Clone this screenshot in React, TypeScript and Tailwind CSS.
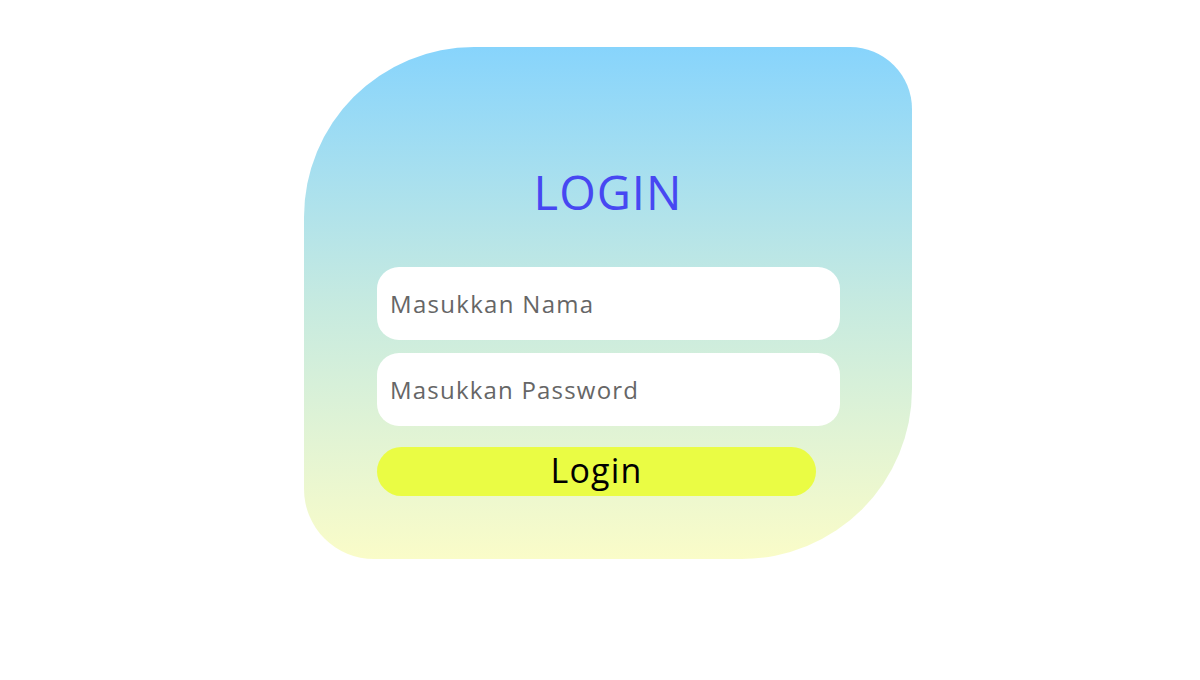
import React from "react";

export default function App() {
  return (
    <div
      className="min-h-[680px] w-full bg-white flex justify-center pt-[47px] pl-[16px]"
      style={{ fontFamily: '"Open Sans", "Liberation Sans", sans-serif' }}
    >
      <div className="w-[608px] h-[512px] bg-gradient-to-b from-[#87d4fc] via-[#c6eae0] to-[#fafcc8] rounded-tl-[170px] rounded-tr-[62px] rounded-br-[170px] rounded-bl-[70px] flex flex-col px-[73px]">
        <h1 className="mt-[109px] h-[72px] flex items-center justify-center text-[47px] leading-none text-[#4747f2] tracking-[1px]">
          LOGIN
        </h1>
        <form className="mt-[39px] flex flex-col" onSubmit={(e) => e.preventDefault()}>
          <input
            type="text"
            placeholder="Masukkan Nama"
            className="h-[73px] w-[463px] rounded-[22px] bg-white px-[13px] text-[24px] tracking-[1.3px] text-[#555] placeholder:text-[#666] outline-none"
          />
          <input
            type="password"
            placeholder="Masukkan Password"
            className="mt-[13px] h-[73px] w-[463px] rounded-[22px] bg-white px-[13px] text-[24px] tracking-[1.2px] text-[#555] placeholder:text-[#666] outline-none"
          />
          <button
            type="submit"
            className="mt-[21px] h-[49px] w-[439px] rounded-full bg-[#eafc44] pb-[4px] text-[34px] leading-none tracking-[1.2px] text-black"
          >
            Login
          </button>
        </form>
      </div>
    </div>
  );
}
